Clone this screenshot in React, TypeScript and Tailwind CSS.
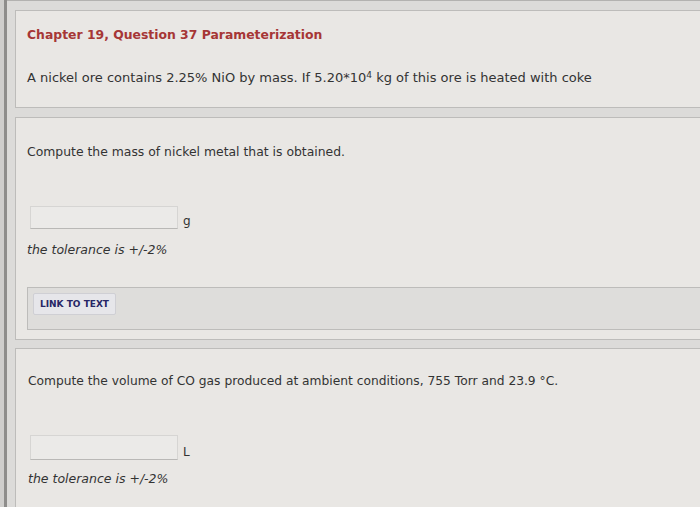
import React from "react";

const font = { fontFamily: '"DejaVu Sans", Verdana, sans-serif' };

function AnswerRow({ unit, h }: { unit: string; h: string }) {
  return (
    <div className="flex items-end gap-[5px]">
      <div className={`w-[148px] ${h} bg-[#ebeae8] border border-[#d6d5d3] border-b-[#b9b8b6]`} />
      <span className="text-[12px] text-[#333] leading-none pb-[2px]">{unit}</span>
    </div>
  );
}

export default function App() {
  return (
    <div
      className="w-[700px] h-[507px] overflow-hidden flex bg-[#dcdbd9] text-[#333]"
      style={font}
    >
      <div className="w-[4px] bg-[#cfcecc]" />
      <div className="w-[3px] bg-[#8e8d8b]" />
      <div className="flex-1 flex flex-col">
        <div className="h-[5px] bg-[#cbcac8] border-b border-[#b3b2b0]" />
        <div className="pl-[8px] pt-[9px] flex flex-col">
          {/* Box 1 */}
          <div className="h-[98px] bg-[#e9e7e4] border border-r-0 border-[#bdbcba] pl-[11px] pt-[15px]">
            <div className="text-[12.4px] font-bold text-[#a63636] leading-[18px]">
              Chapter 19, Question 37 Parameterization
            </div>
            <div className="mt-[25px] text-[13px] leading-[18px]">
              A nickel ore contains 2.25% NiO by mass. If 5.20*10
              <sup className="text-[9px]">4</sup> kg of this ore is heated with coke
            </div>
          </div>

          {/* Box 2 */}
          <div className="mt-[9px] h-[223px] bg-[#e9e7e4] border border-r-0 border-[#bdbcba] pl-[11px] pt-[25px]">
            <div className="text-[12.4px] leading-[18px]">
              Compute the mass of nickel metal that is obtained.
            </div>
            <div className="mt-[45px] pl-[3px]">
              <AnswerRow unit="g" h="h-[23px]" />
            </div>
            <div className="mt-[12px] text-[12.5px] italic leading-[18px]">
              the tolerance is +/-2%
            </div>
            <div className="mt-[28px] h-[43px] flex items-start bg-[#dedddb] border border-r-0 border-[#bdbcba] pl-[5px] pt-[5px]">
              <button className="h-[22px] px-[6px] bg-[#e6e6ea] border border-[#cfcfd4] rounded-[2px] text-[9px] font-bold text-[#272766] leading-none">
                LINK TO TEXT
              </button>
            </div>
          </div>

          {/* Box 3 */}
          <div className="mt-[8px] h-[200px] bg-[#e9e7e4] border border-r-0 border-[#bdbcba] pl-[12px] pt-[23px]">
            <div className="text-[12.25px] leading-[18px]">
              Compute the volume of CO gas produced at ambient conditions, 755 Torr and 23.9 °C.
            </div>
            <div className="mt-[45px] pl-[2px]">
              <AnswerRow unit="L" h="h-[25px]" />
            </div>
            <div className="mt-[10px] text-[12.5px] italic leading-[18px]">
              the tolerance is +/-2%
            </div>
          </div>
        </div>
      </div>
    </div>
  );
}
